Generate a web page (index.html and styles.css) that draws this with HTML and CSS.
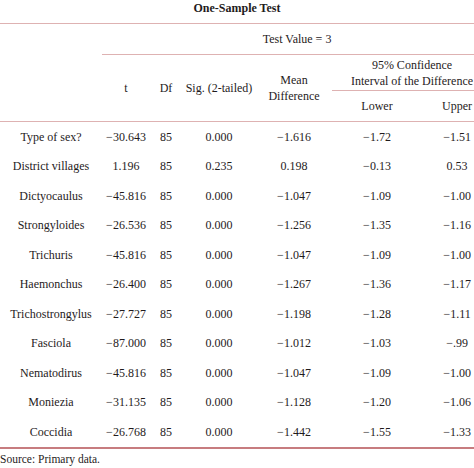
FILE: index.html
```html
<!DOCTYPE html>
<html>
<head>
<meta charset="utf-8">
<link rel="stylesheet" href="styles.css">
</head>
<body>
<div class="frame">
  <div class="title">One-Sample Test</div>
  <table class="stats">
    <colgroup>
      <col class="c-label"><col class="c-t"><col class="c-df"><col class="c-sig"><col class="c-mean"><col class="c-lower"><col class="c-upper">
    </colgroup>
    <thead>
      <tr class="h1">
        <th rowspan="3" class="ruled"></th>
        <th colspan="6" class="ruled">Test Value = 3</th>
      </tr>
      <tr class="h2">
        <th rowspan="2" class="ruled">t</th>
        <th rowspan="2" class="ruled">Df</th>
        <th rowspan="2" class="ruled">Sig. (2-tailed)</th>
        <th rowspan="2" class="ruled">Mean<br>Difference</th>
        <th colspan="2" class="ruled">95% Confidence<br>Interval of the Difference</th>
      </tr>
      <tr class="h3">
        <th class="ruled">Lower</th>
        <th class="ruled">Upper</th>
      </tr>
    </thead>
    <tbody>
      <tr><td>Type of sex?</td><td>−30.643</td><td>85</td><td>0.000</td><td>−1.616</td><td>−1.72</td><td>−1.51</td></tr>
      <tr><td>District villages</td><td>1.196</td><td>85</td><td>0.235</td><td>0.198</td><td>−0.13</td><td>0.53</td></tr>
      <tr><td>Dictyocaulus</td><td>−45.816</td><td>85</td><td>0.000</td><td>−1.047</td><td>−1.09</td><td>−1.00</td></tr>
      <tr><td>Strongyloides</td><td>−26.536</td><td>85</td><td>0.000</td><td>−1.256</td><td>−1.35</td><td>−1.16</td></tr>
      <tr><td>Trichuris</td><td>−45.816</td><td>85</td><td>0.000</td><td>−1.047</td><td>−1.09</td><td>−1.00</td></tr>
      <tr><td>Haemonchus</td><td>−26.400</td><td>85</td><td>0.000</td><td>−1.267</td><td>−1.36</td><td>−1.17</td></tr>
      <tr><td>Trichostrongylus</td><td>−27.727</td><td>85</td><td>0.000</td><td>−1.198</td><td>−1.28</td><td>−1.11</td></tr>
      <tr><td>Fasciola</td><td>−87.000</td><td>85</td><td>0.000</td><td>−1.012</td><td>−1.03</td><td>−.99</td></tr>
      <tr><td>Nematodirus</td><td>−45.816</td><td>85</td><td>0.000</td><td>−1.047</td><td>−1.09</td><td>−1.00</td></tr>
      <tr><td>Moniezia</td><td>−31.135</td><td>85</td><td>0.000</td><td>−1.128</td><td>−1.20</td><td>−1.06</td></tr>
      <tr class="last"><td>Coccidia</td><td>−26.768</td><td>85</td><td>0.000</td><td>−1.442</td><td>−1.55</td><td>−1.33</td></tr>
    </tbody>
  </table>
  <div class="source">Source: Primary data.</div>
</div>
</body>
</html>
```

FILE: styles.css
```css
html, body {
  margin: 0;
  padding: 0;
  background: #ffffff;
  overflow: hidden;
}

.frame {
  width: 474px;
  height: 468px;
  overflow: hidden;
  font-family: "Liberation Serif", "Times New Roman", serif;
  font-size: 12px;
  color: #1f1b1c;
}

.title {
  width: 474px;
  height: 23px;
  line-height: 16px;
  text-align: center;
  font-weight: bold;
  border-bottom: 1px solid #deb2b2;
  box-sizing: content-box;
}

.stats {
  table-layout: fixed;
  width: 492px;
  border-collapse: separate;
  border-spacing: 0;
}

.c-label { width: 102px; }
.c-t { width: 48px; }
.c-df { width: 32px; }
.c-sig { width: 74px; }
.c-mean { width: 76px; }
.c-lower { width: 90px; }
.c-upper { width: 70px; }

.stats th,
.stats td {
  padding: 0;
  text-align: center;
  vertical-align: middle;
  white-space: nowrap;
  line-height: 16px;
}

.stats th {
  font-weight: normal;
}

.stats th.ruled {
  border-bottom: 1px solid #deb2b2;
}

.h1 th { height: 30px; }
.h2 th { height: 35px; }
.h3 th { height: 30px; }

.stats td {
  height: 29.5px;
}

.stats tr.last td {
  border-bottom: 2px solid #c77c7f;
}

.source {
  padding-top: 2px;
  line-height: 16px;
  font-size: 11.5px;
}
```
